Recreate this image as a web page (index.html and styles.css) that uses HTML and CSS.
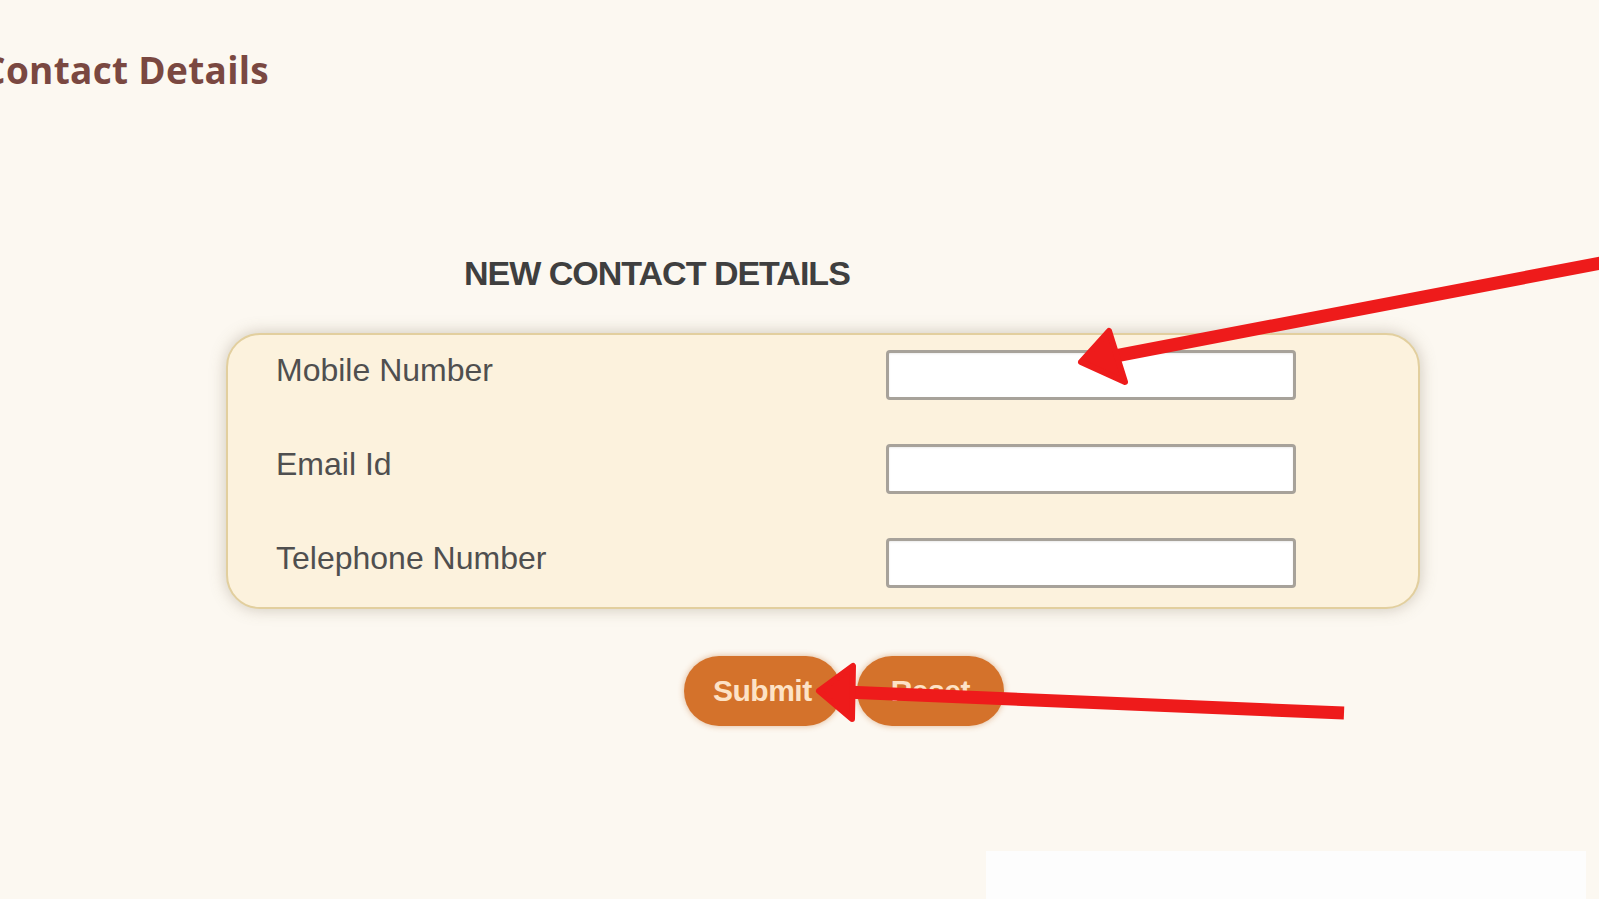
FILE: index.html
```html
<!DOCTYPE html>
<html lang="en">
<head>
<meta charset="utf-8">
<title>Contact Details</title>
<link rel="stylesheet" href="styles.css">
</head>
<body>
<main class="page">
  <h1 class="page-title">Contact Details</h1>
  <section class="contact-form">
    <h2 class="form-title">NEW CONTACT DETAILS</h2>
    <div class="panel">
      <label class="field-label" for="mobile">Mobile Number</label>
      <input class="field-input" id="mobile" type="text">
      <label class="field-label" for="email">Email Id</label>
      <input class="field-input" id="email" type="text">
      <label class="field-label" for="phone">Telephone Number</label>
      <input class="field-input" id="phone" type="text">
    </div>
    <div class="actions">
      <button class="btn" type="button">Submit</button>
      <button class="btn btn-reset" type="button">Reset</button>
    </div>
  </section>
  <div class="cover-box"></div>
  <svg class="annotations" width="1599" height="899" viewBox="0 0 1599 899" xmlns="http://www.w3.org/2000/svg">
    <line x1="1606" y1="262" x2="1110" y2="357" stroke="#ee1b1b" stroke-width="13" stroke-linecap="round"/>
    <polygon points="1081,362 1109,331 1125,382" fill="#ee1b1b" stroke="#ee1b1b" stroke-width="6" stroke-linejoin="round"/>
    <line x1="1344" y1="713" x2="845" y2="692" stroke="#ee1b1b" stroke-width="13"/>
    <polygon points="819,691 853,666 852,719" fill="#ee1b1b" stroke="#ee1b1b" stroke-width="6" stroke-linejoin="round"/>
  </svg>
</main>
</body>
</html>
```
FILE: styles.css
```css
html, body {
  margin: 0;
  padding: 0;
}
body {
  background: #fcf8f1;
  width: 1599px;
  height: 899px;
  overflow: hidden;
  font-family: "Liberation Sans", Arial, sans-serif;
}
.page {
  position: relative;
  width: 1599px;
  height: 899px;
  overflow: hidden;
}
.page-title {
  margin: 0;
  padding-top: 45px;
  margin-left: -18px;
  font-family: "Open Sans", Lato, sans-serif;
  font-weight: 700;
  font-size: 37px;
  line-height: 50px;
  color: #7a4841;
  letter-spacing: 0.3px;
}
.contact-form {
  padding-top: 158px;
}
.form-title {
  margin: 0 0 0 464px;
  font-family: "Liberation Sans", Arial, sans-serif;
  font-weight: 700;
  font-size: 34px;
  line-height: 40px;
  letter-spacing: -1px;
  color: #3f3f3f;
}
.panel {
  margin: 40px 0 0 226px;
  width: 1194px;
  box-sizing: border-box;
  height: 276px;
  padding: 15px 0 0 48px;
  background: #fcf2dd;
  border: 2px solid #e2cf9e;
  border-radius: 34px;
  box-shadow: 0 0 16px rgba(120, 105, 80, 0.35);
  display: grid;
  grid-template-columns: 612px 410px;
  grid-auto-rows: 50px;
  row-gap: 44px;
  align-content: start;
}
.field-label {
  font-size: 32px;
  line-height: 36px;
  color: #4f4f4f;
  margin-top: 2px;
}
.field-input {
  box-sizing: border-box;
  width: 410px;
  height: 50px;
  margin: 0;
  margin-left: -2px;
  background: #ffffff;
  border: 3px solid #a7a29a;
  border-radius: 4px;
  box-shadow: inset 0 1px 2px rgba(0,0,0,0.08);
}
.actions {
  margin: 47px 0 0 684px;
  display: flex;
  gap: 16px;
}
.btn {
  height: 70px;
  padding: 0 29px;
  border: none;
  border-radius: 35px;
  background: #d4722b;
  color: #fde2c6;
  font-family: "Liberation Sans", Arial, sans-serif;
  font-weight: 700;
  font-size: 30px;
  letter-spacing: -0.5px;
  box-shadow: 0 0 6px rgba(190, 100, 30, 0.45);
}
.btn-reset {
  padding: 0 34px;
}
.cover-box {
  position: absolute;
  left: 986px;
  top: 851px;
  width: 600px;
  height: 50px;
  background: #fdfdfd;
}
.annotations {
  position: absolute;
  left: 0;
  top: 0;
  pointer-events: none;
}
```
